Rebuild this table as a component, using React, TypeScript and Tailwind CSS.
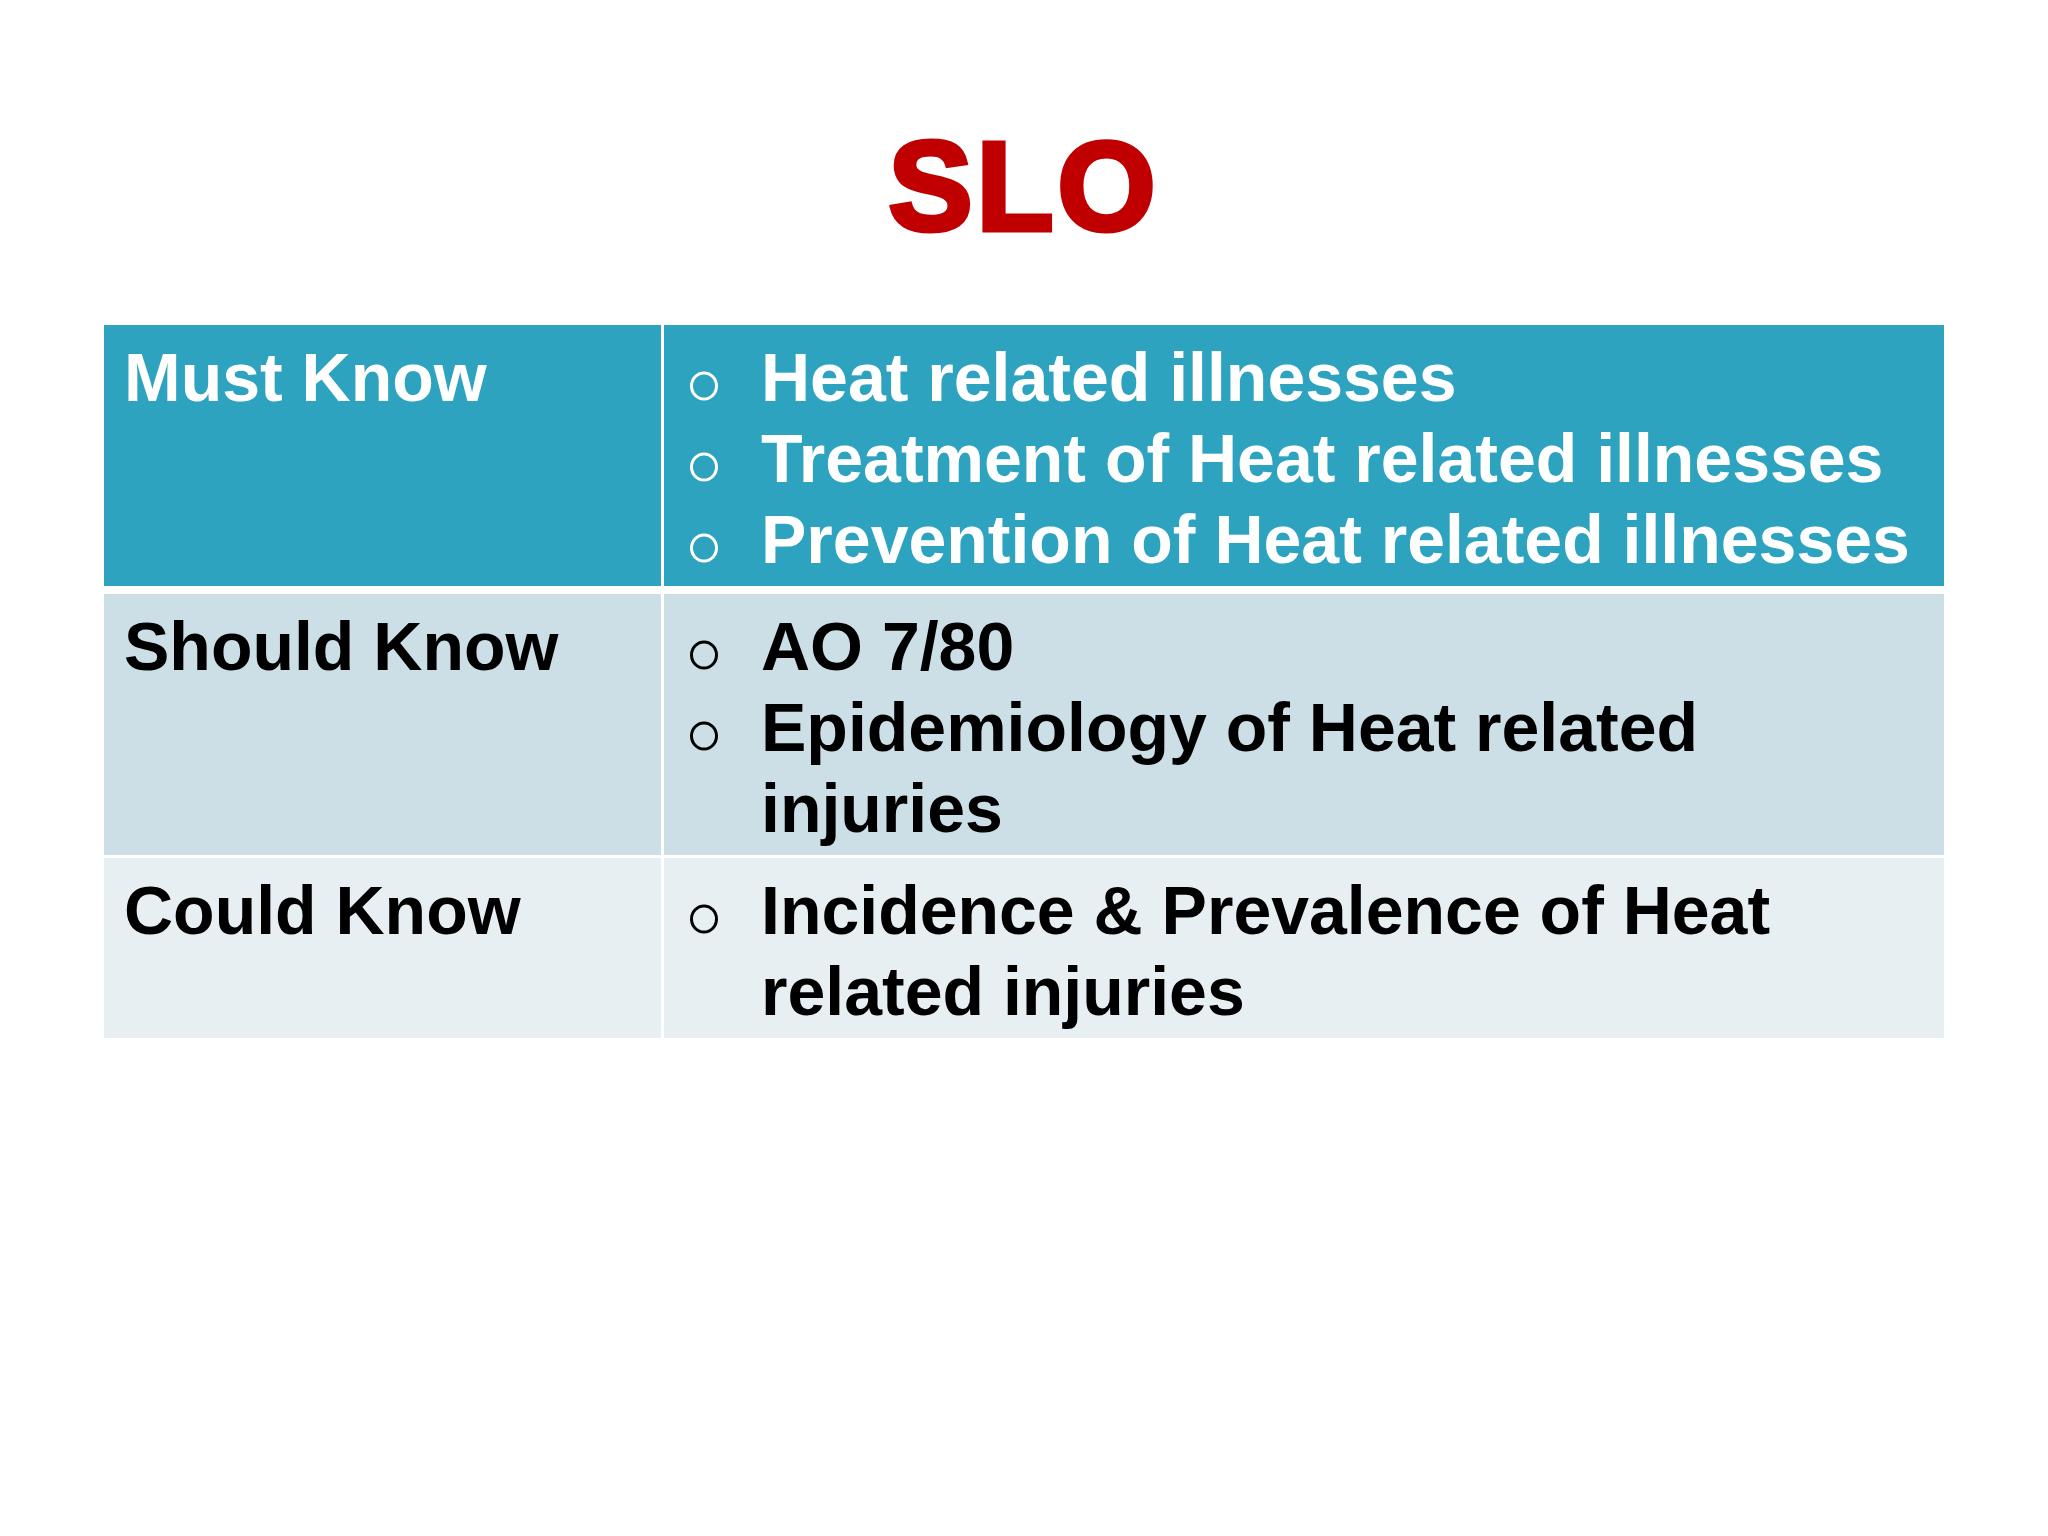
import React from 'react';

type Row = {
  label: string;
  items: React.ReactNode[];
  bg: string;
  dark: boolean;
};

const rows: Row[] = [
  {
    label: 'Must Know',
    bg: 'bg-[#2ea3c0]',
    dark: true,
    items: [
      'Heat related illnesses',
      'Treatment of Heat related illnesses',
      'Prevention of Heat related illnesses',
    ],
  },
  {
    label: 'Should Know',
    bg: 'bg-[#cddfe6]',
    dark: false,
    items: [
      'AO 7/80',
      <>
        Epidemiology of Heat related
        <br />
        injuries
      </>,
    ],
  },
  {
    label: 'Could Know',
    bg: 'bg-[#e8eff3]',
    dark: false,
    items: [
      <>
        Incidence &amp; Prevalence of Heat
        <br />
        related injuries
      </>,
    ],
  },
];

function Bullet({ light }: { light: boolean }) {
  return (
    <svg
      width="30"
      height="30"
      viewBox="0 0 30 30"
      className="inline-block align-baseline"
    >
      <ellipse
        cx="15"
        cy="15"
        rx="12.5"
        ry="13"
        fill="none"
        stroke={light ? '#ffffff' : '#000000'}
        strokeWidth="3"
      />
    </svg>
  );
}

function TableRow({ row, className }: { row: Row; className?: string }) {
  const text = row.dark ? 'text-white' : 'text-black';
  return (
    <div className={`grid grid-cols-[557px_1280px] gap-x-[3px] ${className ?? ''}`}>
      <div className={`${row.bg} ${text} pl-[20px] pt-[12px]`}>
        <div className="whitespace-nowrap">{row.label}</div>
      </div>
      <div className={`${row.bg} ${text} pl-[25px] pt-[12px] pb-[6px]`}>
        {row.items.map((item, i) => (
          <div key={i} className="flex">
            <span className="w-[72px] shrink-0">
              <Bullet light={row.dark} />
            </span>
            <span className="whitespace-nowrap">{item}</span>
          </div>
        ))}
      </div>
    </div>
  );
}

export default function App() {
  return (
    <div className="h-[1536px] w-[2048px] overflow-hidden bg-white font-['Liberation_Sans',Arial,sans-serif]">
      <div className="pt-[124px] text-center">
        <h1 className="font-bold text-[#c00000] text-[126px] leading-none tracking-[4px] [-webkit-text-stroke:5px_#c00000]">
          SLO
        </h1>
      </div>

      <div className="mt-[75px] ml-[104px] w-[1840px] font-bold text-[68px] leading-[81px]">
        <TableRow row={rows[0]} className="mb-[8px]" />
        <TableRow row={rows[1]} className="mb-[3px]" />
        <TableRow row={rows[2]} />
      </div>
    </div>
  );
}
